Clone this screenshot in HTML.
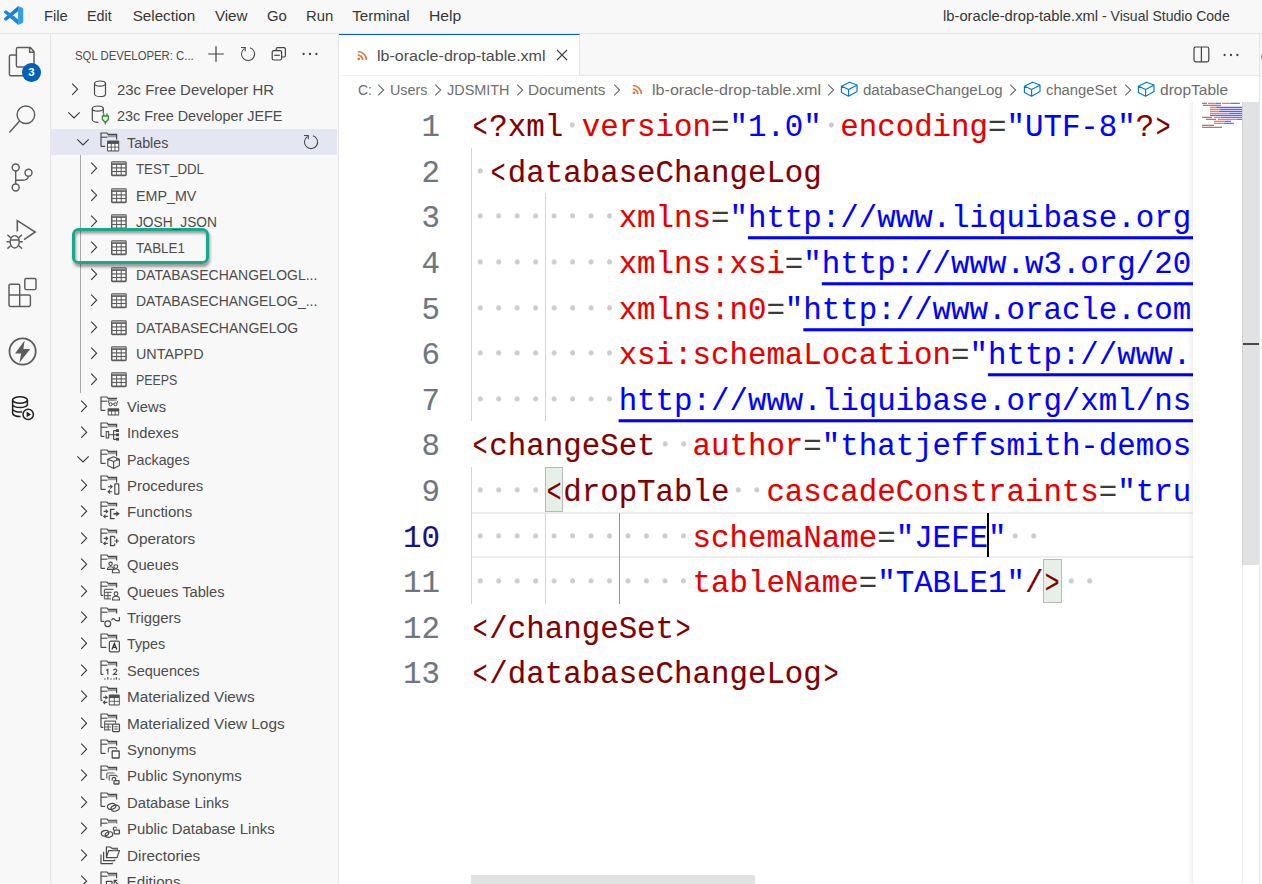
<!DOCTYPE html>
<html lang="en"><head><meta charset="utf-8"><title>lb-oracle-drop-table.xml - Visual Studio Code</title>
<style>
html,body{margin:0;padding:0}
body{width:1262px;height:884px;overflow:hidden;background:#f8f8f8;font-family:"Liberation Sans",sans-serif;position:relative;color:#3b3b3b;-webkit-font-smoothing:antialiased}
div,span,svg{box-sizing:border-box}
.a{position:absolute}
.t{position:absolute;white-space:pre;line-height:20px;height:20px;transform-origin:0 50%}
#titlebar{position:absolute;left:0;top:0;width:1262px;height:34px;background:#f8f8f8;border-bottom:1px solid #e5e5e5}
#activity{position:absolute;left:0;top:34px;width:51px;height:850px;background:#f8f8f8;border-right:1px solid #e5e5e5}
#sidebar{position:absolute;left:51px;top:34px;width:288px;height:850px;background:#f8f8f8;border-right:1px solid #e5e5e5}
#tabs{position:absolute;left:339px;top:34px;width:921px;height:42px;background:#f8f8f8;border-bottom:1px solid #e5e5e5}
#tab{position:absolute;left:0;top:0;width:241px;height:42px;background:#fff;border-top:1px solid #005fb8;border-right:1px solid #e5e5e5;border-bottom:1px solid #f3f3f3}
#crumbs{position:absolute;left:339px;top:76px;width:921px;height:26px;background:#fff}
#editor{position:absolute;left:339px;top:102px;width:921px;height:782px;background:#fff;overflow:hidden}
#right{position:absolute;left:1259px;top:34px;width:3px;height:850px;background:#fff;border-left:1px solid #e5e5e5;overflow:hidden}
#right i{position:absolute;left:0;top:0;width:2px;height:42px;background:#f8f8f8;border-bottom:1px solid #e5e5e5}
#right b{position:absolute;left:0.5px;top:17px;width:10px;height:10px;border:1.2px solid #8a8a8a;border-radius:50%}
#code{position:absolute;left:0;top:0;width:854px;height:782px;overflow:hidden}
.ln{position:absolute;left:0;width:102px;text-align:right;color:#6e7681;font-family:"Liberation Mono",monospace;white-space:pre}
.ln.cur{color:#171184}
.cl{position:absolute;white-space:pre;font-family:"Liberation Mono",monospace;color:#3b3b3b}
.tg{color:#800000}.br{display:inline-block;transform:scale(0.8,1.07) translateY(0.6px)}.at{color:#e50000}.st{color:#0000ff}.eq{color:#3b3b3b}
.u{text-decoration:underline;text-decoration-color:#0000ff}
.ws{background-repeat:repeat-x}
.g{position:absolute;width:1.2px;background:#d3d3d3}
.g.act{background:#939393}
.sel{position:absolute;background:#e4e6f1}
</style></head>
<body>
<div id="titlebar"><svg class="a" style="left:0.00px;top:0.00px" width="28" height="32" viewBox="0 0 28 32" ><path d="M18.3 6 L18.3 11 L6.6 20.5 Q5.7 21 4.9 20.3 L4.2 19.6 Q3.6 18.7 4.4 17.9 Z" fill="#1f7cc4"/><path d="M18.3 25 L18.3 19.6 L6.6 10.5 Q5.7 10 4.9 10.7 L4.2 11.4 Q3.6 12.3 4.4 13.1 Z" fill="#1b8ad8"/><path d="M18.1 6 L22.6 8.1 Q23.2 8.5 23.2 9.2 V21.8 Q23.2 22.5 22.6 22.9 L18.1 25 Z" fill="#2f9fee"/></svg></div>
<div id="activity"><svg class="a" style="left:6.00px;top:10.00px" width="32" height="36" viewBox="0 0 32 36" ><path d="M17.2 3.5 H24.4 L28 7.6 V21.4 a1.6 1.6 0 0 1 -1.6 1.6 H12 a1.6 1.6 0 0 1 -1.6 -1.6 V5.1 a1.6 1.6 0 0 1 1.6 -1.6 Z M23.6 3.8 V8.2 H27.8" fill="none" stroke="#5c5c5c" stroke-width="1.45" stroke-linejoin="round"/><path d="M10.4 11 H5 a1.6 1.6 0 0 0 -1.6 1.6 V30.2 a1.6 1.6 0 0 0 1.6 1.6 H17.6 a1.6 1.6 0 0 0 1.6 -1.6 V23" fill="none" stroke="#5c5c5c" stroke-width="1.45" /></svg><div class="a" style="left:22.1px;top:29.1px;width:18.8px;height:18.8px;border-radius:50%;background:#005fb8"></div><span class="a" style="left:22.1px;top:29.1px;width:18.8px;height:18.8px;line-height:19.2px;text-align:center;font-size:11.5px;font-weight:bold;color:#fff">3</span><svg class="a" style="left:6.00px;top:68.00px" width="34" height="34" viewBox="0 0 34 34" ><circle cx="19.9" cy="12.7" r="8.8" fill="none" stroke="#5c5c5c" stroke-width="1.45"/><path d="M13.6 19 L3.4 30.6" fill="none" stroke="#5c5c5c" stroke-width="1.45" /></svg><svg class="a" style="left:8.00px;top:126.00px" width="30" height="34" viewBox="0 0 30 34" ><circle cx="7.7" cy="7.4" r="3.5" fill="none" stroke="#5c5c5c" stroke-width="1.45"/><circle cx="20.5" cy="12.7" r="3.5" fill="none" stroke="#5c5c5c" stroke-width="1.45"/><circle cx="7.7" cy="27.4" r="3.5" fill="none" stroke="#5c5c5c" stroke-width="1.45"/><path d="M7.7 10.9 V23.9 M7.7 20.2 H14.6 q5.4 0 5.8 -4" fill="none" stroke="#5c5c5c" stroke-width="1.45" /></svg><svg class="a" style="left:4.00px;top:182.00px" width="36" height="40" viewBox="0 0 36 40" ><path d="M13.3 15.4 V4.6 L31.2 16 L20 23.6" fill="none" stroke="#5c5c5c" stroke-width="1.55" stroke-linejoin="miter"/><ellipse cx="10.7" cy="25.8" rx="4.6" ry="6.2" fill="none" stroke="#5c5c5c" stroke-width="1.45" /><path d="M6.2 24 H15.2 M3.4 18.8 L6.6 21.6 M18 18.8 L14.8 21.6 M2.6 25.8 H6 M15.4 25.8 H18.8 M3.4 32.6 L6.6 29.8 M18 32.6 L14.8 29.8" fill="none" stroke="#5c5c5c" stroke-width="1.45" /></svg><svg class="a" style="left:6.00px;top:242.00px" width="34" height="34" viewBox="0 0 34 34" ><path d="M3 9.6 a1.4 1.4 0 0 1 1.4 -1.4 H12.3 a1.4 1.4 0 0 1 1.4 1.4 V19 H23 a1.4 1.4 0 0 1 1.4 1.4 V29 a1.4 1.4 0 0 1 -1.4 1.4 H4.4 a1.4 1.4 0 0 1 -1.4 -1.4 Z M3 19 H13.7 V30.4" fill="none" stroke="#5c5c5c" stroke-width="1.45" /><rect x="18.8" y="2.4" width="11.2" height="11.2" rx="1.6" fill="none" stroke="#5c5c5c" stroke-width="1.45"/></svg><svg class="a" style="left:6.00px;top:301.00px" width="34" height="34" viewBox="0 0 34 34" ><circle cx="16.6" cy="16.5" r="13.1" fill="none" stroke="#5c5c5c" stroke-width="1.7999999999999998"/><path d="M18.6 5.4 L9 18.6 H15.2 L13.4 27.8 L24.2 14 H17.4 Z" fill="#5c5c5c"/></svg><svg class="a" style="left:10.00px;top:360.00px" width="28" height="28" viewBox="0 0 28 28" ><ellipse cx="10" cy="6" rx="7.4" ry="3.2" fill="none" stroke="#1f1f1f" stroke-width="1.5" /><path d="M2.6 6 V19.4 a7.4 3.2 0 0 0 8 3.1 M17.4 6 V11.4 M2.6 10.4 a7.4 3.2 0 0 0 14.8 0 M2.6 15 a7.4 3.2 0 0 0 9.6 2.9" fill="none" stroke="#1f1f1f" stroke-width="1.5" /><circle cx="18.2" cy="20.4" r="5.2" fill="#f8f8f8" stroke="#1f1f1f" stroke-width="1.5"/><path d="M16.6 17.6 L21 20.4 L16.6 23.2 Z" fill="#1f1f1f"/></svg></div>
<div id="sidebar"><div class="sel" style="left:0;top:95.0px;width:286px;height:26px"></div>
<div class="g" style="left:28.9px;width:1px;top:121.0px;height:238.0px;background:#a9a9a9"></div>
<svg class="a" style="left:155.74px;top:10.84px" width="18" height="18" viewBox="0 0 18 18" ><path d="M9 1.2 V16.8 M1.2 9 H16.8" fill="none" stroke="#424242" stroke-width="1.2" /></svg><svg class="a" style="left:187.50px;top:11.35px" width="18" height="18" viewBox="0 0 18 18" ><path d="M10.9 2.7 A6.6 6.6 0 1 1 5.6 3.4" fill="none" stroke="#4a4a4a" stroke-width="1.05" /><path d="M2 2.5 H6.3 V6.2" fill="none" stroke="#4a4a4a" stroke-width="1.05" /></svg><svg class="a" style="left:219.80px;top:12.10px" width="16" height="16" viewBox="0 0 16 16" ><rect x="1.2" y="4.6" width="9.4" height="9.4" rx="1.4" fill="none" stroke="#424242" stroke-width="1.2"/><path d="M3.2 9.3 H8.8" fill="none" stroke="#424242" stroke-width="1.2" /><path d="M5.2 4.4 V3 a1.4 1.4 0 0 1 1.4 -1.4 H13 a1.4 1.4 0 0 1 1.4 1.4 V9.6 a1.4 1.4 0 0 1 -1.4 1.4 H10.8" fill="none" stroke="#424242" stroke-width="1.2" /></svg><svg class="a" style="left:249.60px;top:17.10px" width="18" height="6" viewBox="0 0 18 6" ><circle cx="2.6" cy="3" r="1.15" fill="#424242"/><circle cx="9" cy="3" r="1.15" fill="#424242"/><circle cx="15.4" cy="3" r="1.15" fill="#424242"/></svg><svg class="a" style="left:251.30px;top:98.90px" width="18" height="18" viewBox="0 0 18 18" ><path d="M10.9 2.7 A6.6 6.6 0 1 1 5.6 3.4" fill="none" stroke="#4a4a4a" stroke-width="1.05" /><path d="M2 2.5 H6.3 V6.2" fill="none" stroke="#4a4a4a" stroke-width="1.05" /></svg>
<svg class="a" style="left:19.00px;top:46.20px" width="10" height="18" viewBox="0 0 10 18" ><path d="M2.2 3.6 L7.6 9.2 L2.2 14.8" fill="none" stroke="#3b3b3b" stroke-width="1.15" /></svg>
<svg class="a" style="left:42.40px;top:45.90px" width="14" height="19" viewBox="0 0 14 19" ><ellipse cx="7" cy="3.6" rx="5.5" ry="2.6" fill="none" stroke="#4a4a4a" stroke-width="1.2" /><path d="M1.5 3.6 V13.9 A5.5 2.6 0 0 0 12.5 13.9 V3.6" fill="none" stroke="#4a4a4a" stroke-width="1.2" /></svg>
<svg class="a" style="left:14.00px;top:76.20px" width="18" height="10" viewBox="0 0 18 10" ><path d="M3.3 2.3 L9 7.9 L14.7 2.3" fill="none" stroke="#3b3b3b" stroke-width="1.15" /></svg>
<svg class="a" style="left:39.70px;top:70.60px" width="20" height="21" viewBox="0 0 20 21" ><ellipse cx="6.8" cy="3.6" rx="5.5" ry="2.6" fill="none" stroke="#4a4a4a" stroke-width="1.2" /><path d="M1.3 3.6 V14.8 A5.5 2.6 0 0 0 7.4 17.3 M12.3 3.6 V8.4" fill="none" stroke="#4a4a4a" stroke-width="1.2" /><path d="M11.4 11 H17.4 V14.4 L14.4 17.6 L11.4 14.4 Z" fill="none" stroke="#388a34" stroke-width="1.4" stroke-linejoin="round"/><path d="M12.8 8.6 V11 M16 8.6 V11 M14.4 17.6 V19.4" fill="none" stroke="#388a34" stroke-width="1.4" /></svg>
<svg class="a" style="left:23.20px;top:103.20px" width="18" height="10" viewBox="0 0 18 10" ><path d="M3.3 2.3 L9 7.9 L14.7 2.3" fill="none" stroke="#3b3b3b" stroke-width="1.15" /></svg>
<svg class="a" style="left:48.90px;top:98.10px" width="22" height="22" viewBox="0 0 22 22" ><rect x="7.8" y="2.6" width="8.8" height="2.6" rx="0" fill="#9a9a9a"/><path d="M1 14.4 V1 H7.0 L8.2 2.4 H16.6 V7.6" fill="none" stroke="#4a4a4a" stroke-width="1.2" /><path d="M1 5.2 H7.4" fill="none" stroke="#4a4a4a" stroke-width="1.1" /><path d="M1 14.4 H5.2" fill="none" stroke="#4a4a4a" stroke-width="1.2" /><rect x="7.0" y="8.4" width="12.2" height="11" rx="1" fill="#505050"/><rect x="8.0" y="11.9" width="2.8" height="2.8" rx="0" fill="#fff"/><rect x="11.7" y="11.9" width="2.8" height="2.8" rx="0" fill="#fff"/><rect x="15.4" y="11.9" width="2.8" height="2.8" rx="0" fill="#fff"/><rect x="8.0" y="15.6" width="2.8" height="2.8" rx="0" fill="#fff"/><rect x="11.7" y="15.6" width="2.8" height="2.8" rx="0" fill="#fff"/><rect x="15.4" y="15.6" width="2.8" height="2.8" rx="0" fill="#fff"/></svg>
<svg class="a" style="left:38.20px;top:125.20px" width="10" height="18" viewBox="0 0 10 18" ><path d="M2.2 3.6 L7.6 9.2 L2.2 14.8" fill="none" stroke="#3b3b3b" stroke-width="1.15" /></svg>
<svg class="a" style="left:60.00px;top:127.00px" width="16" height="16" viewBox="0 0 16 16" ><rect x="0" y="0.3" width="15.8" height="14.9" rx="1.4" fill="#5c5c5c"/><rect x="1.0" y="1.1" width="13.8" height="1.3" rx="0.3" fill="#a4a4a4"/><rect x="1.5" y="3.9" width="3.6" height="2.4" rx="0" fill="#fdfdfd"/><rect x="6.1" y="3.9" width="3.6" height="2.4" rx="0" fill="#fdfdfd"/><rect x="10.7" y="3.9" width="3.6" height="2.4" rx="0" fill="#fdfdfd"/><rect x="1.5" y="7.5" width="3.6" height="2.4" rx="0" fill="#fdfdfd"/><rect x="6.1" y="7.5" width="3.6" height="2.4" rx="0" fill="#fdfdfd"/><rect x="10.7" y="7.5" width="3.6" height="2.4" rx="0" fill="#fdfdfd"/><rect x="1.5" y="11.1" width="3.6" height="2.4" rx="0" fill="#fdfdfd"/><rect x="6.1" y="11.1" width="3.6" height="2.4" rx="0" fill="#fdfdfd"/><rect x="10.7" y="11.1" width="3.6" height="2.4" rx="0" fill="#fdfdfd"/></svg>
<svg class="a" style="left:38.20px;top:152.20px" width="10" height="18" viewBox="0 0 10 18" ><path d="M2.2 3.6 L7.6 9.2 L2.2 14.8" fill="none" stroke="#3b3b3b" stroke-width="1.15" /></svg>
<svg class="a" style="left:60.00px;top:154.00px" width="16" height="16" viewBox="0 0 16 16" ><rect x="0" y="0.3" width="15.8" height="14.9" rx="1.4" fill="#5c5c5c"/><rect x="1.0" y="1.1" width="13.8" height="1.3" rx="0.3" fill="#a4a4a4"/><rect x="1.5" y="3.9" width="3.6" height="2.4" rx="0" fill="#fdfdfd"/><rect x="6.1" y="3.9" width="3.6" height="2.4" rx="0" fill="#fdfdfd"/><rect x="10.7" y="3.9" width="3.6" height="2.4" rx="0" fill="#fdfdfd"/><rect x="1.5" y="7.5" width="3.6" height="2.4" rx="0" fill="#fdfdfd"/><rect x="6.1" y="7.5" width="3.6" height="2.4" rx="0" fill="#fdfdfd"/><rect x="10.7" y="7.5" width="3.6" height="2.4" rx="0" fill="#fdfdfd"/><rect x="1.5" y="11.1" width="3.6" height="2.4" rx="0" fill="#fdfdfd"/><rect x="6.1" y="11.1" width="3.6" height="2.4" rx="0" fill="#fdfdfd"/><rect x="10.7" y="11.1" width="3.6" height="2.4" rx="0" fill="#fdfdfd"/></svg>
<svg class="a" style="left:38.20px;top:178.20px" width="10" height="18" viewBox="0 0 10 18" ><path d="M2.2 3.6 L7.6 9.2 L2.2 14.8" fill="none" stroke="#3b3b3b" stroke-width="1.15" /></svg>
<svg class="a" style="left:60.00px;top:180.00px" width="16" height="16" viewBox="0 0 16 16" ><rect x="0" y="0.3" width="15.8" height="14.9" rx="1.4" fill="#5c5c5c"/><rect x="1.0" y="1.1" width="13.8" height="1.3" rx="0.3" fill="#a4a4a4"/><rect x="1.5" y="3.9" width="3.6" height="2.4" rx="0" fill="#fdfdfd"/><rect x="6.1" y="3.9" width="3.6" height="2.4" rx="0" fill="#fdfdfd"/><rect x="10.7" y="3.9" width="3.6" height="2.4" rx="0" fill="#fdfdfd"/><rect x="1.5" y="7.5" width="3.6" height="2.4" rx="0" fill="#fdfdfd"/><rect x="6.1" y="7.5" width="3.6" height="2.4" rx="0" fill="#fdfdfd"/><rect x="10.7" y="7.5" width="3.6" height="2.4" rx="0" fill="#fdfdfd"/><rect x="1.5" y="11.1" width="3.6" height="2.4" rx="0" fill="#fdfdfd"/><rect x="6.1" y="11.1" width="3.6" height="2.4" rx="0" fill="#fdfdfd"/><rect x="10.7" y="11.1" width="3.6" height="2.4" rx="0" fill="#fdfdfd"/></svg>
<svg class="a" style="left:38.20px;top:204.20px" width="10" height="18" viewBox="0 0 10 18" ><path d="M2.2 3.6 L7.6 9.2 L2.2 14.8" fill="none" stroke="#3b3b3b" stroke-width="1.15" /></svg>
<svg class="a" style="left:60.00px;top:206.00px" width="16" height="16" viewBox="0 0 16 16" ><rect x="0" y="0.3" width="15.8" height="14.9" rx="1.4" fill="#5c5c5c"/><rect x="1.0" y="1.1" width="13.8" height="1.3" rx="0.3" fill="#a4a4a4"/><rect x="1.5" y="3.9" width="3.6" height="2.4" rx="0" fill="#fdfdfd"/><rect x="6.1" y="3.9" width="3.6" height="2.4" rx="0" fill="#fdfdfd"/><rect x="10.7" y="3.9" width="3.6" height="2.4" rx="0" fill="#fdfdfd"/><rect x="1.5" y="7.5" width="3.6" height="2.4" rx="0" fill="#fdfdfd"/><rect x="6.1" y="7.5" width="3.6" height="2.4" rx="0" fill="#fdfdfd"/><rect x="10.7" y="7.5" width="3.6" height="2.4" rx="0" fill="#fdfdfd"/><rect x="1.5" y="11.1" width="3.6" height="2.4" rx="0" fill="#fdfdfd"/><rect x="6.1" y="11.1" width="3.6" height="2.4" rx="0" fill="#fdfdfd"/><rect x="10.7" y="11.1" width="3.6" height="2.4" rx="0" fill="#fdfdfd"/></svg>
<svg class="a" style="left:38.20px;top:231.20px" width="10" height="18" viewBox="0 0 10 18" ><path d="M2.2 3.6 L7.6 9.2 L2.2 14.8" fill="none" stroke="#3b3b3b" stroke-width="1.15" /></svg>
<svg class="a" style="left:60.00px;top:233.00px" width="16" height="16" viewBox="0 0 16 16" ><rect x="0" y="0.3" width="15.8" height="14.9" rx="1.4" fill="#5c5c5c"/><rect x="1.0" y="1.1" width="13.8" height="1.3" rx="0.3" fill="#a4a4a4"/><rect x="1.5" y="3.9" width="3.6" height="2.4" rx="0" fill="#fdfdfd"/><rect x="6.1" y="3.9" width="3.6" height="2.4" rx="0" fill="#fdfdfd"/><rect x="10.7" y="3.9" width="3.6" height="2.4" rx="0" fill="#fdfdfd"/><rect x="1.5" y="7.5" width="3.6" height="2.4" rx="0" fill="#fdfdfd"/><rect x="6.1" y="7.5" width="3.6" height="2.4" rx="0" fill="#fdfdfd"/><rect x="10.7" y="7.5" width="3.6" height="2.4" rx="0" fill="#fdfdfd"/><rect x="1.5" y="11.1" width="3.6" height="2.4" rx="0" fill="#fdfdfd"/><rect x="6.1" y="11.1" width="3.6" height="2.4" rx="0" fill="#fdfdfd"/><rect x="10.7" y="11.1" width="3.6" height="2.4" rx="0" fill="#fdfdfd"/></svg>
<svg class="a" style="left:38.20px;top:257.20px" width="10" height="18" viewBox="0 0 10 18" ><path d="M2.2 3.6 L7.6 9.2 L2.2 14.8" fill="none" stroke="#3b3b3b" stroke-width="1.15" /></svg>
<svg class="a" style="left:60.00px;top:259.00px" width="16" height="16" viewBox="0 0 16 16" ><rect x="0" y="0.3" width="15.8" height="14.9" rx="1.4" fill="#5c5c5c"/><rect x="1.0" y="1.1" width="13.8" height="1.3" rx="0.3" fill="#a4a4a4"/><rect x="1.5" y="3.9" width="3.6" height="2.4" rx="0" fill="#fdfdfd"/><rect x="6.1" y="3.9" width="3.6" height="2.4" rx="0" fill="#fdfdfd"/><rect x="10.7" y="3.9" width="3.6" height="2.4" rx="0" fill="#fdfdfd"/><rect x="1.5" y="7.5" width="3.6" height="2.4" rx="0" fill="#fdfdfd"/><rect x="6.1" y="7.5" width="3.6" height="2.4" rx="0" fill="#fdfdfd"/><rect x="10.7" y="7.5" width="3.6" height="2.4" rx="0" fill="#fdfdfd"/><rect x="1.5" y="11.1" width="3.6" height="2.4" rx="0" fill="#fdfdfd"/><rect x="6.1" y="11.1" width="3.6" height="2.4" rx="0" fill="#fdfdfd"/><rect x="10.7" y="11.1" width="3.6" height="2.4" rx="0" fill="#fdfdfd"/></svg>
<svg class="a" style="left:38.20px;top:284.20px" width="10" height="18" viewBox="0 0 10 18" ><path d="M2.2 3.6 L7.6 9.2 L2.2 14.8" fill="none" stroke="#3b3b3b" stroke-width="1.15" /></svg>
<svg class="a" style="left:60.00px;top:286.00px" width="16" height="16" viewBox="0 0 16 16" ><rect x="0" y="0.3" width="15.8" height="14.9" rx="1.4" fill="#5c5c5c"/><rect x="1.0" y="1.1" width="13.8" height="1.3" rx="0.3" fill="#a4a4a4"/><rect x="1.5" y="3.9" width="3.6" height="2.4" rx="0" fill="#fdfdfd"/><rect x="6.1" y="3.9" width="3.6" height="2.4" rx="0" fill="#fdfdfd"/><rect x="10.7" y="3.9" width="3.6" height="2.4" rx="0" fill="#fdfdfd"/><rect x="1.5" y="7.5" width="3.6" height="2.4" rx="0" fill="#fdfdfd"/><rect x="6.1" y="7.5" width="3.6" height="2.4" rx="0" fill="#fdfdfd"/><rect x="10.7" y="7.5" width="3.6" height="2.4" rx="0" fill="#fdfdfd"/><rect x="1.5" y="11.1" width="3.6" height="2.4" rx="0" fill="#fdfdfd"/><rect x="6.1" y="11.1" width="3.6" height="2.4" rx="0" fill="#fdfdfd"/><rect x="10.7" y="11.1" width="3.6" height="2.4" rx="0" fill="#fdfdfd"/></svg>
<svg class="a" style="left:38.20px;top:310.20px" width="10" height="18" viewBox="0 0 10 18" ><path d="M2.2 3.6 L7.6 9.2 L2.2 14.8" fill="none" stroke="#3b3b3b" stroke-width="1.15" /></svg>
<svg class="a" style="left:60.00px;top:312.00px" width="16" height="16" viewBox="0 0 16 16" ><rect x="0" y="0.3" width="15.8" height="14.9" rx="1.4" fill="#5c5c5c"/><rect x="1.0" y="1.1" width="13.8" height="1.3" rx="0.3" fill="#a4a4a4"/><rect x="1.5" y="3.9" width="3.6" height="2.4" rx="0" fill="#fdfdfd"/><rect x="6.1" y="3.9" width="3.6" height="2.4" rx="0" fill="#fdfdfd"/><rect x="10.7" y="3.9" width="3.6" height="2.4" rx="0" fill="#fdfdfd"/><rect x="1.5" y="7.5" width="3.6" height="2.4" rx="0" fill="#fdfdfd"/><rect x="6.1" y="7.5" width="3.6" height="2.4" rx="0" fill="#fdfdfd"/><rect x="10.7" y="7.5" width="3.6" height="2.4" rx="0" fill="#fdfdfd"/><rect x="1.5" y="11.1" width="3.6" height="2.4" rx="0" fill="#fdfdfd"/><rect x="6.1" y="11.1" width="3.6" height="2.4" rx="0" fill="#fdfdfd"/><rect x="10.7" y="11.1" width="3.6" height="2.4" rx="0" fill="#fdfdfd"/></svg>
<svg class="a" style="left:38.20px;top:336.20px" width="10" height="18" viewBox="0 0 10 18" ><path d="M2.2 3.6 L7.6 9.2 L2.2 14.8" fill="none" stroke="#3b3b3b" stroke-width="1.15" /></svg>
<svg class="a" style="left:60.00px;top:338.00px" width="16" height="16" viewBox="0 0 16 16" ><rect x="0" y="0.3" width="15.8" height="14.9" rx="1.4" fill="#5c5c5c"/><rect x="1.0" y="1.1" width="13.8" height="1.3" rx="0.3" fill="#a4a4a4"/><rect x="1.5" y="3.9" width="3.6" height="2.4" rx="0" fill="#fdfdfd"/><rect x="6.1" y="3.9" width="3.6" height="2.4" rx="0" fill="#fdfdfd"/><rect x="10.7" y="3.9" width="3.6" height="2.4" rx="0" fill="#fdfdfd"/><rect x="1.5" y="7.5" width="3.6" height="2.4" rx="0" fill="#fdfdfd"/><rect x="6.1" y="7.5" width="3.6" height="2.4" rx="0" fill="#fdfdfd"/><rect x="10.7" y="7.5" width="3.6" height="2.4" rx="0" fill="#fdfdfd"/><rect x="1.5" y="11.1" width="3.6" height="2.4" rx="0" fill="#fdfdfd"/><rect x="6.1" y="11.1" width="3.6" height="2.4" rx="0" fill="#fdfdfd"/><rect x="10.7" y="11.1" width="3.6" height="2.4" rx="0" fill="#fdfdfd"/></svg>
<svg class="a" style="left:28.20px;top:363.20px" width="10" height="18" viewBox="0 0 10 18" ><path d="M2.2 3.6 L7.6 9.2 L2.2 14.8" fill="none" stroke="#3b3b3b" stroke-width="1.15" /></svg>
<svg class="a" style="left:48.90px;top:362.10px" width="22" height="22" viewBox="0 0 22 22" ><rect x="7.8" y="2.6" width="8.8" height="2.6" rx="0" fill="#9a9a9a"/><path d="M1 14.4 V1 H7.0 L8.2 2.4 H16.6 V3" fill="none" stroke="#4a4a4a" stroke-width="1.2" /><path d="M1 5.2 H7.4" fill="none" stroke="#4a4a4a" stroke-width="1.1" /><path d="M1 14.4 H5.2" fill="none" stroke="#4a4a4a" stroke-width="1.2" /><circle cx="10.6" cy="8.3" r="1.5" fill="none" stroke="#4a4a4a" stroke-width="1.0"/><circle cx="15.4" cy="8.3" r="1.5" fill="none" stroke="#4a4a4a" stroke-width="1.0"/><path d="M12.1 8 h1.8 M9.1 7.6 L8.4 5.2 M16.9 7.6 L17.7 5.2" fill="none" stroke="#4a4a4a" stroke-width="1.0" /><rect x="7.6" y="12.2" width="11.6" height="7.2" rx="1" fill="#505050"/><rect x="8.6" y="15.5" width="2.6" height="2.9" rx="0" fill="#fff"/><rect x="12.1" y="15.5" width="2.6" height="2.9" rx="0" fill="#fff"/><rect x="15.6" y="15.5" width="2.6" height="2.9" rx="0" fill="#fff"/></svg>
<svg class="a" style="left:28.20px;top:389.20px" width="10" height="18" viewBox="0 0 10 18" ><path d="M2.2 3.6 L7.6 9.2 L2.2 14.8" fill="none" stroke="#3b3b3b" stroke-width="1.15" /></svg>
<svg class="a" style="left:48.90px;top:388.10px" width="22" height="22" viewBox="0 0 22 22" ><rect x="7.8" y="2.6" width="8.8" height="2.6" rx="0" fill="#9a9a9a"/><path d="M1 14.4 V1 H7.0 L8.2 2.4 H16.6 V5.6" fill="none" stroke="#4a4a4a" stroke-width="1.2" /><path d="M1 5.2 H7.4" fill="none" stroke="#4a4a4a" stroke-width="1.1" /><path d="M1 14.4 H4.4" fill="none" stroke="#4a4a4a" stroke-width="1.2" /><rect x="6.2" y="9.6" width="2.4" height="6.4" rx="0" fill="none" stroke="#4a4a4a" stroke-width="1.1"/><path d="M8.6 12.8 H13.6 M13.6 8.6 V17.4 M13.6 8.6 H16 M13.6 17.4 H16 M13.6 12.8 H16" fill="none" stroke="#4a4a4a" stroke-width="1.1" /><rect x="16" y="7.2" width="3" height="2.8" rx="0" fill="#4a4a4a"/><rect x="16" y="11.4" width="3" height="2.8" rx="0" fill="#4a4a4a"/><rect x="16" y="15.8" width="3" height="2.8" rx="0" fill="#4a4a4a"/></svg>
<svg class="a" style="left:23.20px;top:420.20px" width="18" height="10" viewBox="0 0 18 10" ><path d="M3.3 2.3 L9 7.9 L14.7 2.3" fill="none" stroke="#3b3b3b" stroke-width="1.15" /></svg>
<svg class="a" style="left:48.90px;top:415.10px" width="22" height="22" viewBox="0 0 22 22" ><rect x="7.8" y="2.6" width="8.8" height="2.6" rx="0" fill="#9a9a9a"/><path d="M1 14.4 V1 H7.0 L8.2 2.4 H16.6 V7.2" fill="none" stroke="#4a4a4a" stroke-width="1.2" /><path d="M1 5.2 H7.4" fill="none" stroke="#4a4a4a" stroke-width="1.1" /><path d="M1 14.4 H5.6" fill="none" stroke="#4a4a4a" stroke-width="1.2" /><path d="M13.6 7.8 L19.4 10.2 V16.6 L13.6 19.6 L7.8 16.6 V10.2 Z M7.8 10.2 L13.6 12.6 L19.4 10.2 M13.6 12.6 V19.6 M16.6 9 V11.4" fill="none" stroke="#4a4a4a" stroke-width="1.1" stroke-linejoin="round"/></svg>
<svg class="a" style="left:28.20px;top:442.20px" width="10" height="18" viewBox="0 0 10 18" ><path d="M2.2 3.6 L7.6 9.2 L2.2 14.8" fill="none" stroke="#3b3b3b" stroke-width="1.15" /></svg>
<svg class="a" style="left:48.90px;top:441.10px" width="22" height="22" viewBox="0 0 22 22" ><rect x="7.8" y="2.6" width="8.8" height="2.6" rx="0" fill="#9a9a9a"/><path d="M1 14.4 V1 H7.0 L8.2 2.4 H16.6 V7.6" fill="none" stroke="#4a4a4a" stroke-width="1.2" /><path d="M1 5.2 H7.4" fill="none" stroke="#4a4a4a" stroke-width="1.1" /><path d="M1 14.4 H5.6" fill="none" stroke="#4a4a4a" stroke-width="1.2" /><path d="M8 11.8 h4 M10.2 10.0 l1.9 1.8 l-1.9 1.8" fill="none" stroke="#4a4a4a" stroke-width="1.1" /><path d="M12.2 16.8 h-4 M10 15.0 l-1.9 1.8 l1.9 1.8" fill="none" stroke="#4a4a4a" stroke-width="1.1" /><rect x="14.8" y="8.8" width="4" height="10.4" rx="0.6" fill="none" stroke="#4a4a4a" stroke-width="1.2"/></svg>
<svg class="a" style="left:28.20px;top:468.20px" width="10" height="18" viewBox="0 0 10 18" ><path d="M2.2 3.6 L7.6 9.2 L2.2 14.8" fill="none" stroke="#3b3b3b" stroke-width="1.15" /></svg>
<svg class="a" style="left:48.90px;top:467.10px" width="22" height="22" viewBox="0 0 22 22" ><rect x="7.8" y="2.6" width="8.8" height="2.6" rx="0" fill="#9a9a9a"/><path d="M1 14.4 V1 H7.0 L8.2 2.4 H16.6 V5.6" fill="none" stroke="#4a4a4a" stroke-width="1.2" /><path d="M1 5.2 H7.4" fill="none" stroke="#4a4a4a" stroke-width="1.1" /><path d="M1 14.4 H2.4" fill="none" stroke="#4a4a4a" stroke-width="1.2" /><path d="M3.6 10.4 h4 M5.800000000000001 8.6 l1.9 1.8 l-1.9 1.8" fill="none" stroke="#4a4a4a" stroke-width="1.1" /><path d="M7.800000000000001 15.4 h-4 M5.6 13.600000000000001 l-1.9 1.8 l1.9 1.8" fill="none" stroke="#4a4a4a" stroke-width="1.1" /><path d="M14.6 8.4 H10.6 V17.6 H14.6" fill="none" stroke="#4a4a4a" stroke-width="1.4" /><path d="M13.4 12.8 H17" fill="none" stroke="#4a4a4a" stroke-width="1.8" /><path d="M16.2 10 L19.8 12.8 L16.2 15.6 Z" fill="#4a4a4a"/></svg>
<svg class="a" style="left:28.20px;top:495.20px" width="10" height="18" viewBox="0 0 10 18" ><path d="M2.2 3.6 L7.6 9.2 L2.2 14.8" fill="none" stroke="#3b3b3b" stroke-width="1.15" /></svg>
<svg class="a" style="left:48.90px;top:494.10px" width="22" height="22" viewBox="0 0 22 22" ><rect x="7.8" y="2.6" width="8.8" height="2.6" rx="0" fill="#9a9a9a"/><path d="M1 14.4 V1 H7.0 L8.2 2.4 H16.6 V5.6" fill="none" stroke="#4a4a4a" stroke-width="1.2" /><path d="M1 5.2 H7.4" fill="none" stroke="#4a4a4a" stroke-width="1.1" /><path d="M1 14.4 H2.4" fill="none" stroke="#4a4a4a" stroke-width="1.2" /><path d="M3.6 10.4 h4 M5.800000000000001 8.6 l1.9 1.8 l-1.9 1.8" fill="none" stroke="#4a4a4a" stroke-width="1.1" /><path d="M7.800000000000001 15.4 h-4 M5.6 13.600000000000001 l-1.9 1.8 l1.9 1.8" fill="none" stroke="#4a4a4a" stroke-width="1.1" /><path d="M14.6 8.4 H10.6 V17.6 H14.6 M14.6 8.4 V10.4 M14.6 17.6 V15.6" fill="none" stroke="#4a4a4a" stroke-width="1.4" /><path d="M14.4 13 H19 M16.7 10.7 V15.3" fill="none" stroke="#4a4a4a" stroke-width="1.2" /></svg>
<svg class="a" style="left:28.20px;top:521.20px" width="10" height="18" viewBox="0 0 10 18" ><path d="M2.2 3.6 L7.6 9.2 L2.2 14.8" fill="none" stroke="#3b3b3b" stroke-width="1.15" /></svg>
<svg class="a" style="left:48.90px;top:520.10px" width="22" height="22" viewBox="0 0 22 22" ><rect x="7.8" y="2.6" width="8.8" height="2.6" rx="0" fill="#9a9a9a"/><path d="M1 14.4 V1 H7.0 L8.2 2.4 H16.6 V6.4" fill="none" stroke="#4a4a4a" stroke-width="1.2" /><path d="M1 5.2 H7.4" fill="none" stroke="#4a4a4a" stroke-width="1.1" /><path d="M1 14.4 H5.0" fill="none" stroke="#4a4a4a" stroke-width="1.2" /><circle cx="10.6" cy="9.8" r="1.71" fill="none" stroke="#4a4a4a" stroke-width="1.1"/><path d="M7.539999999999999 15.38 v-1.2 a3.4 2.6 0 0 1 6.12 0 v1.2 z" fill="none" stroke="#4a4a4a" stroke-width="1.1" /><circle cx="15.8" cy="12.6" r="1.9" fill="none" stroke="#4a4a4a" stroke-width="1.1"/><path d="M12.4 18.8 v-1.2 a3.4 2.6 0 0 1 6.8 0 v1.2 z" fill="none" stroke="#4a4a4a" stroke-width="1.1" /></svg>
<svg class="a" style="left:28.20px;top:548.20px" width="10" height="18" viewBox="0 0 10 18" ><path d="M2.2 3.6 L7.6 9.2 L2.2 14.8" fill="none" stroke="#3b3b3b" stroke-width="1.15" /></svg>
<svg class="a" style="left:48.90px;top:547.10px" width="22" height="22" viewBox="0 0 22 22" ><rect x="7.8" y="2.6" width="8.8" height="2.6" rx="0" fill="#9a9a9a"/><path d="M1 14.4 V1 H7.0 L8.2 2.4 H16.6 V6.4" fill="none" stroke="#4a4a4a" stroke-width="1.2" /><path d="M1 5.2 H7.4" fill="none" stroke="#4a4a4a" stroke-width="1.1" /><path d="M1 14.4 H3.2" fill="none" stroke="#4a4a4a" stroke-width="1.2" /><path d="M4.4 8.4 H13.4 M4.4 11.4 H11.6 M4.4 14.6 H11 M4.4 17.8 H11 M4.4 8.4 V17.8 M8 11.4 V17.8" fill="none" stroke="#666" stroke-width="1.2" /><circle cx="16" cy="12.8" r="1.9" fill="none" stroke="#4a4a4a" stroke-width="1.1"/><path d="M12.6 19.0 v-1.2 a3.4 2.6 0 0 1 6.8 0 v1.2 z" fill="none" stroke="#4a4a4a" stroke-width="1.1" /></svg>
<svg class="a" style="left:28.20px;top:574.20px" width="10" height="18" viewBox="0 0 10 18" ><path d="M2.2 3.6 L7.6 9.2 L2.2 14.8" fill="none" stroke="#3b3b3b" stroke-width="1.15" /></svg>
<svg class="a" style="left:48.90px;top:573.10px" width="22" height="22" viewBox="0 0 22 22" ><rect x="7.8" y="2.6" width="8.8" height="2.6" rx="0" fill="#9a9a9a"/><path d="M1 14.4 V1 H7.0 L8.2 2.4 H16.6 V6.4" fill="none" stroke="#4a4a4a" stroke-width="1.2" /><path d="M1 5.2 H7.4" fill="none" stroke="#4a4a4a" stroke-width="1.1" /><path d="M1 14.4 H4.4" fill="none" stroke="#4a4a4a" stroke-width="1.2" /><circle cx="7.8" cy="16.8" r="2.9" fill="none" stroke="#4a4a4a" stroke-width="1.2"/><path d="M11.4 13.4 q1.6 -3 3.2 -1 q1.8 2.4 4.2 1 M19.4 10 V13.6 H15.8" fill="none" stroke="#4a4a4a" stroke-width="1.2" /></svg>
<svg class="a" style="left:28.20px;top:600.20px" width="10" height="18" viewBox="0 0 10 18" ><path d="M2.2 3.6 L7.6 9.2 L2.2 14.8" fill="none" stroke="#3b3b3b" stroke-width="1.15" /></svg>
<svg class="a" style="left:48.90px;top:599.10px" width="22" height="22" viewBox="0 0 22 22" ><rect x="7.8" y="2.6" width="8.8" height="2.6" rx="0" fill="#9a9a9a"/><path d="M1 14.4 V1 H7.0 L8.2 2.4 H16.6 V6.4" fill="none" stroke="#4a4a4a" stroke-width="1.2" /><path d="M1 5.2 H7.4" fill="none" stroke="#4a4a4a" stroke-width="1.1" /><path d="M1 14.4 H6.4" fill="none" stroke="#4a4a4a" stroke-width="1.2" /><rect x="9.4" y="8.2" width="10" height="10.6" rx="1.4" fill="none" stroke="#4a4a4a" stroke-width="1.2"/><path d="M12 16.4 L14.4 10.4 L16.8 16.4 M12.9 14.4 H15.9" fill="none" stroke="#333" stroke-width="1.3" /></svg>
<svg class="a" style="left:28.20px;top:627.20px" width="10" height="18" viewBox="0 0 10 18" ><path d="M2.2 3.6 L7.6 9.2 L2.2 14.8" fill="none" stroke="#3b3b3b" stroke-width="1.15" /></svg>
<svg class="a" style="left:48.90px;top:626.10px" width="22" height="22" viewBox="0 0 22 22" ><rect x="7.8" y="2.6" width="8.8" height="2.6" rx="0" fill="#9a9a9a"/><path d="M1 14.4 V1 H7.0 L8.2 2.4 H16.6 V6.4" fill="none" stroke="#4a4a4a" stroke-width="1.2" /><path d="M1 5.2 H7.4" fill="none" stroke="#4a4a4a" stroke-width="1.1" /><path d="M1 14.4 H3.4" fill="none" stroke="#4a4a4a" stroke-width="1.2" /><path d="M6.2 10.6 L7.8 9.4 V14.6" fill="none" stroke="#4a4a4a" stroke-width="1.2" /><path d="M13.6 10.4 q0.2 -1.2 1.6 -1.2 q1.6 0 1.6 1.4 q0 1 -3.2 3.8 H17.2" fill="none" stroke="#4a4a4a" stroke-width="1.2" /><rect x="4.2" y="18.4" width="1.2" height="1.2" rx="0" fill="#4a4a4a"/><rect x="7.2" y="17.2" width="1.2" height="2.4" rx="0" fill="#4a4a4a"/><rect x="10.4" y="18.4" width="1.2" height="1.2" rx="0" fill="#4a4a4a"/><rect x="13.4" y="18.4" width="1.2" height="1.2" rx="0" fill="#4a4a4a"/><rect x="15.8" y="17.2" width="1.2" height="2.4" rx="0" fill="#4a4a4a"/><rect x="18.6" y="18.4" width="1.2" height="1.2" rx="0" fill="#4a4a4a"/></svg>
<svg class="a" style="left:28.20px;top:653.20px" width="10" height="18" viewBox="0 0 10 18" ><path d="M2.2 3.6 L7.6 9.2 L2.2 14.8" fill="none" stroke="#3b3b3b" stroke-width="1.15" /></svg>
<svg class="a" style="left:48.90px;top:652.10px" width="22" height="22" viewBox="0 0 22 22" ><rect x="7.8" y="2.6" width="8.8" height="2.6" rx="0" fill="#9a9a9a"/><path d="M1 14.4 V1 H7.0 L8.2 2.4 H16.6 V7.2" fill="none" stroke="#4a4a4a" stroke-width="1.2" /><path d="M1 5.2 H7.4" fill="none" stroke="#4a4a4a" stroke-width="1.1" /><path d="M1 14.4 H2.4" fill="none" stroke="#4a4a4a" stroke-width="1.2" /><path d="M3.2 11.4 h4 M5.4 9.6 l1.9 1.8 l-1.9 1.8" fill="none" stroke="#4a4a4a" stroke-width="1.1" /><path d="M7.4 16.4 h-4 M5.2 14.600000000000001 l-1.9 1.8 l1.9 1.8" fill="none" stroke="#4a4a4a" stroke-width="1.1" /><rect x="8.8" y="8.6" width="11" height="10.8" rx="1" fill="#505050"/><rect x="9.8" y="12.1" width="4.05" height="2.7" rx="0" fill="#fff"/><rect x="14.75" y="12.1" width="4.05" height="2.7" rx="0" fill="#fff"/><rect x="9.8" y="15.7" width="4.05" height="2.7" rx="0" fill="#fff"/><rect x="14.75" y="15.7" width="4.05" height="2.7" rx="0" fill="#fff"/></svg>
<svg class="a" style="left:28.20px;top:680.20px" width="10" height="18" viewBox="0 0 10 18" ><path d="M2.2 3.6 L7.6 9.2 L2.2 14.8" fill="none" stroke="#3b3b3b" stroke-width="1.15" /></svg>
<svg class="a" style="left:48.90px;top:679.10px" width="22" height="22" viewBox="0 0 22 22" ><rect x="7.8" y="2.6" width="8.8" height="2.6" rx="0" fill="#9a9a9a"/><path d="M1 14.4 V1 H7.0 L8.2 2.4 H16.6 V6.4" fill="none" stroke="#4a4a4a" stroke-width="1.2" /><path d="M1 5.2 H7.4" fill="none" stroke="#4a4a4a" stroke-width="1.1" /><path d="M1 14.4 H3.4" fill="none" stroke="#4a4a4a" stroke-width="1.2" /><path d="M4.6 8.2 H15.6 V10.4 M4.6 8.2 V16.8 H10.6 M4.6 11.2 H12 M4.6 14 H11 M8.2 11.2 V16.8" fill="none" stroke="#666" stroke-width="1.2" /><rect x="12.6" y="11.2" width="6.8" height="7.4" rx="0.8" fill="none" stroke="#4a4a4a" stroke-width="1.3"/><path d="M14.4 13.8 H17.6 M14.4 16 H17.6" fill="none" stroke="#4a4a4a" stroke-width="1.1" /></svg>
<svg class="a" style="left:28.20px;top:706.20px" width="10" height="18" viewBox="0 0 10 18" ><path d="M2.2 3.6 L7.6 9.2 L2.2 14.8" fill="none" stroke="#3b3b3b" stroke-width="1.15" /></svg>
<svg class="a" style="left:48.90px;top:705.10px" width="22" height="22" viewBox="0 0 22 22" ><rect x="7.8" y="2.6" width="8.8" height="2.6" rx="0" fill="#9a9a9a"/><path d="M1 14.4 V1 H7.0 L8.2 2.4 H16.6 V6.4" fill="none" stroke="#4a4a4a" stroke-width="1.2" /><path d="M1 5.2 H7.4" fill="none" stroke="#4a4a4a" stroke-width="1.1" /><path d="M1 14.4 H5.6" fill="none" stroke="#4a4a4a" stroke-width="1.2" /><path d="M8.4 13.6 V9.8 q0 -1.2 1.2 -1.2 H15.4 q1.2 0 1.2 1.2 V10.4" fill="none" stroke="#666" stroke-width="1.2" /><rect x="12.2" y="12" width="7" height="7" rx="0.6" fill="none" stroke="#4a4a4a" stroke-width="1.3"/></svg>
<svg class="a" style="left:28.20px;top:732.20px" width="10" height="18" viewBox="0 0 10 18" ><path d="M2.2 3.6 L7.6 9.2 L2.2 14.8" fill="none" stroke="#3b3b3b" stroke-width="1.15" /></svg>
<svg class="a" style="left:48.90px;top:731.10px" width="22" height="22" viewBox="0 0 22 22" ><rect x="7.8" y="2.6" width="8.8" height="2.6" rx="0" fill="#9a9a9a"/><path d="M1 14.4 V1 H7.0 L8.2 2.4 H16.6 V5.6" fill="none" stroke="#4a4a4a" stroke-width="1.2" /><path d="M1 5.2 H7.4" fill="none" stroke="#4a4a4a" stroke-width="1.1" /><path d="M1 14.4 H4.6" fill="none" stroke="#4a4a4a" stroke-width="1.2" /><path d="M6.8 13.4 V9 q0 -1 1 -1 H14.6 M9.2 15.4 V11.4 q0 -1 1 -1 H16 q1 0 1 1 V12" fill="none" stroke="#666" stroke-width="1.2" /><path d="M12.2 15.6 V14 a1.7 1.7 0 0 1 3.4 0 V15.2" fill="none" stroke="#4a4a4a" stroke-width="1.2" /><rect x="14" y="15.6" width="5" height="3.4" rx="0.4" fill="none" stroke="#4a4a4a" stroke-width="1.3"/></svg>
<svg class="a" style="left:28.20px;top:759.20px" width="10" height="18" viewBox="0 0 10 18" ><path d="M2.2 3.6 L7.6 9.2 L2.2 14.8" fill="none" stroke="#3b3b3b" stroke-width="1.15" /></svg>
<svg class="a" style="left:48.90px;top:758.10px" width="22" height="22" viewBox="0 0 22 22" ><rect x="7.8" y="2.6" width="8.8" height="2.6" rx="0" fill="#9a9a9a"/><path d="M1 14.4 V1 H7.0 L8.2 2.4 H16.6 V7.4" fill="none" stroke="#4a4a4a" stroke-width="1.2" /><path d="M1 5.2 H7.4" fill="none" stroke="#4a4a4a" stroke-width="1.1" /><path d="M1 14.4 H5.2" fill="none" stroke="#4a4a4a" stroke-width="1.2" /><ellipse cx="11.6" cy="14.4" rx="4.2" ry="2.9" fill="none" stroke="#4a4a4a" stroke-width="1.2" transform="rotate(-14 11.6 14.4)"/><ellipse cx="15.2" cy="16.2" rx="4.2" ry="2.9" fill="none" stroke="#4a4a4a" stroke-width="1.2" transform="rotate(-14 15.2 16.2)"/></svg>
<svg class="a" style="left:28.20px;top:785.20px" width="10" height="18" viewBox="0 0 10 18" ><path d="M2.2 3.6 L7.6 9.2 L2.2 14.8" fill="none" stroke="#3b3b3b" stroke-width="1.15" /></svg>
<svg class="a" style="left:48.90px;top:784.10px" width="22" height="22" viewBox="0 0 22 22" ><path d="M1 8.4 V1 H7.0 L8.2 2.4 H16.6 V5.6" fill="none" stroke="#4a4a4a" stroke-width="1.2" /><rect x="7.8" y="2.6" width="8.8" height="2.6" rx="0" fill="#9a9a9a"/><path d="M1 5.2 H7.4" fill="none" stroke="#4a4a4a" stroke-width="1.1" /><ellipse cx="5" cy="15.2" rx="3.8" ry="2.7" fill="none" stroke="#4a4a4a" stroke-width="1.2" transform="rotate(-14 5 15.2)"/><ellipse cx="9" cy="16.6" rx="3.8" ry="2.7" fill="none" stroke="#4a4a4a" stroke-width="1.2" transform="rotate(-14 9 16.6)"/><path d="M13.4 12 V10.6 a1.6 1.6 0 0 1 3.2 0" fill="none" stroke="#4a4a4a" stroke-width="1.2" /><rect x="14.2" y="12.2" width="5.2" height="3.6" rx="0.4" fill="none" stroke="#4a4a4a" stroke-width="1.3"/></svg>
<svg class="a" style="left:28.20px;top:812.20px" width="10" height="18" viewBox="0 0 10 18" ><path d="M2.2 3.6 L7.6 9.2 L2.2 14.8" fill="none" stroke="#3b3b3b" stroke-width="1.15" /></svg>
<svg class="a" style="left:48.90px;top:811.10px" width="22" height="22" viewBox="0 0 22 22" ><path d="M1 9.4 V18.6 H12.2 V17.4 M3.6 6.8 V15.6 H14.6 V14.6" fill="none" stroke="#4a4a4a" stroke-width="1.2" /><path d="M6.4 12.6 V2 H10.6 L12 3.4 H17.4 V5.6" fill="none" stroke="#4a4a4a" stroke-width="1.2" /><path d="M6.4 12.6 L8.6 5.6 H19.4 L17 12.6 Z" fill="none" stroke="#4a4a4a" stroke-width="1.2" stroke-linejoin="round"/><rect x="12.4" y="3.6" width="5" height="2" rx="0" fill="#9a9a9a"/></svg>
<svg class="a" style="left:28.20px;top:838.20px" width="10" height="18" viewBox="0 0 10 18" ><path d="M2.2 3.6 L7.6 9.2 L2.2 14.8" fill="none" stroke="#3b3b3b" stroke-width="1.15" /></svg>
<svg class="a" style="left:48.90px;top:837.10px" width="22" height="22" viewBox="0 0 22 22" ><rect x="7.8" y="2.6" width="8.8" height="2.6" rx="0" fill="#9a9a9a"/><path d="M1 14.4 V1 H7.0 L8.2 2.4 H16.6 V7.2" fill="none" stroke="#4a4a4a" stroke-width="1.2" /><path d="M1 5.2 H7.4" fill="none" stroke="#4a4a4a" stroke-width="1.1" /><path d="M1 14.4 H3.4" fill="none" stroke="#4a4a4a" stroke-width="1.2" /><rect x="6.4" y="10.4" width="5.6" height="8" rx="0.4" fill="none" stroke="#4a4a4a" stroke-width="1.2"/><rect x="8.2" y="13" width="2" height="1.2" rx="0" fill="#4a4a4a"/><path d="M19.2 14.6 L14.4 9.6 M14.2 12.6 V9.4 H17.4" fill="none" stroke="#4a4a4a" stroke-width="1.3" /></svg>
<div class="a" style="left:21.2px;top:194px;width:137.3px;height:36px;border:3.4px solid #16aa8b;border-radius:6.5px;box-shadow:1px 2.5px 3px rgba(0,0,0,0.38),inset 1px 2.5px 3px rgba(0,0,0,0.38)"></div></div>
<div id="tabs"><div id="tab"></div><svg class="a" style="left:17.70px;top:15.60px" width="11" height="11" viewBox="0 0 11 11" ><circle cx="1.9" cy="8.9" r="1.35" fill="#e37933" stroke="#e37933" stroke-width="0"/><path d="M0.8 5.1 a5 5 0 0 1 5 5 M0.8 1.5 a8.6 8.6 0 0 1 8.6 8.6" fill="none" stroke="#e37933" stroke-width="1.7" /></svg><svg class="a" style="left:217.30px;top:15.00px" width="12" height="12" viewBox="0 0 12 12" ><path d="M1 1 L11 11 M11 1 L1 11" fill="none" stroke="#424242" stroke-width="1.2" /></svg><svg class="a" style="left:853.90px;top:11.60px" width="17" height="17" viewBox="0 0 17 17" ><rect x="1" y="1" width="14.8" height="14.8" rx="1.8" fill="none" stroke="#424242" stroke-width="1.2"/><path d="M8.4 1 V15.8" fill="none" stroke="#424242" stroke-width="1.2" /></svg><svg class="a" style="left:882.90px;top:17.60px" width="18" height="6" viewBox="0 0 18 6" ><circle cx="2.6" cy="3" r="1.15" fill="#424242"/><circle cx="9" cy="3" r="1.15" fill="#424242"/><circle cx="15.4" cy="3" r="1.15" fill="#424242"/></svg></div>
<div id="crumbs"><svg class="a" style="left:38.05px;top:6.50px" width="9" height="14" viewBox="0 0 9 14" ><path d="M1.2 1.7 L6.7 7 L1.2 12.3" fill="none" stroke="#6b6b6b" stroke-width="1.1" /></svg><svg class="a" style="left:94.55px;top:6.50px" width="9" height="14" viewBox="0 0 9 14" ><path d="M1.2 1.7 L6.7 7 L1.2 12.3" fill="none" stroke="#6b6b6b" stroke-width="1.1" /></svg><svg class="a" style="left:176.95px;top:6.50px" width="9" height="14" viewBox="0 0 9 14" ><path d="M1.2 1.7 L6.7 7 L1.2 12.3" fill="none" stroke="#6b6b6b" stroke-width="1.1" /></svg><svg class="a" style="left:274.25px;top:6.50px" width="9" height="14" viewBox="0 0 9 14" ><path d="M1.2 1.7 L6.7 7 L1.2 12.3" fill="none" stroke="#6b6b6b" stroke-width="1.1" /></svg><svg class="a" style="left:487.85px;top:6.50px" width="9" height="14" viewBox="0 0 9 14" ><path d="M1.2 1.7 L6.7 7 L1.2 12.3" fill="none" stroke="#6b6b6b" stroke-width="1.1" /></svg><svg class="a" style="left:670.35px;top:6.50px" width="9" height="14" viewBox="0 0 9 14" ><path d="M1.2 1.7 L6.7 7 L1.2 12.3" fill="none" stroke="#6b6b6b" stroke-width="1.1" /></svg><svg class="a" style="left:784.55px;top:6.50px" width="9" height="14" viewBox="0 0 9 14" ><path d="M1.2 1.7 L6.7 7 L1.2 12.3" fill="none" stroke="#6b6b6b" stroke-width="1.1" /></svg><svg class="a" style="left:293.20px;top:8.20px" width="11" height="11" viewBox="0 0 11 11" ><circle cx="1.9" cy="8.9" r="1.35" fill="#e37933" stroke="#e37933" stroke-width="0"/><path d="M0.8 5.1 a5 5 0 0 1 5 5 M0.8 1.5 a8.6 8.6 0 0 1 8.6 8.6" fill="none" stroke="#e37933" stroke-width="1.7" /></svg><svg class="a" style="left:501.30px;top:4.60px" width="19" height="18" viewBox="0 0 19 18" ><path d="M9.6 1.2 L17 4 V10.6 L8.6 15.2 L1.4 11.6 V5.2 Z M1.6 5.2 L8.6 8.6 L16.8 4.2 M8.6 8.6 V15" fill="none" stroke="#007acc" stroke-width="1.15" stroke-linejoin="round"/></svg><svg class="a" style="left:683.70px;top:4.60px" width="19" height="18" viewBox="0 0 19 18" ><path d="M9.6 1.2 L17 4 V10.6 L8.6 15.2 L1.4 11.6 V5.2 Z M1.6 5.2 L8.6 8.6 L16.8 4.2 M8.6 8.6 V15" fill="none" stroke="#007acc" stroke-width="1.15" stroke-linejoin="round"/></svg><svg class="a" style="left:798.00px;top:4.60px" width="19" height="18" viewBox="0 0 19 18" ><path d="M9.6 1.2 L17 4 V10.6 L8.6 15.2 L1.4 11.6 V5.2 Z M1.6 5.2 L8.6 8.6 L16.8 4.2 M8.6 8.6 V15" fill="none" stroke="#007acc" stroke-width="1.15" stroke-linejoin="round"/></svg></div>
<div id="editor"><div id="code"><style>.cl,.ln{font-size:30.79px;letter-spacing:-0.004px;line-height:45.6px;height:45.6px;-webkit-text-stroke:0.12px;transform:scaleY(1.025);transform-origin:0 31.01px}.ws{background-image:radial-gradient(circle at 9.24px 15.2px,#cccccc 2.1px,rgba(204,204,204,0) 2.9px);background-size:18.473px 100%}.u{text-decoration-thickness:2.5px;text-underline-offset:8.8px}</style>
<div class="a" style="left:131.9px;top:410.0px;width:722.1px;height:45.8px;border-top:2px solid #eeeeee;border-bottom:2px solid #eeeeee"></div>
<div class="a" style="left:205.5px;top:365.3px;width:18.5px;height:44.4px;background:#e6f0e6;border:1px solid #b9b9b9"></div>
<div class="a" style="left:704.3px;top:456.5px;width:18.5px;height:44.4px;background:#e6f0e6;border:1px solid #b9b9b9"></div>
<div class="g" style="left:131.9px;top:45.8px;height:273.6px"></div>
<div class="g" style="left:205.8px;top:91.4px;height:228.0px"></div>
<div class="g" style="left:131.9px;top:365.0px;height:136.8px"></div>
<div class="g" style="left:205.8px;top:410.6px;height:91.2px"></div>
<div class="g act" style="left:279.7px;top:410.6px;height:91.2px"></div>
<div class="ln" style="top:3.1px;left:-1px">1</div>
<div class="cl" style="left:131.9px;top:3.1px"><span class="tg"><span class="br">&lt;</span>?xml</span><span class="ws"> </span><span class="at">version</span><span class="eq">=</span><span class="st">&quot;1.0&quot;</span><span class="ws"> </span><span class="at">encoding</span><span class="eq">=</span><span class="st">&quot;UTF-8&quot;</span><span class="tg">?<span class="br">&gt;</span></span></div>
<div class="ln" style="top:48.7px;left:-1px">2</div>
<div class="cl" style="left:131.9px;top:48.7px"><span class="ws"> </span><span class="tg"><span class="br">&lt;</span>databaseChangeLog</span></div>
<div class="ln" style="top:94.3px;left:-1px">3</div>
<div class="cl" style="left:131.9px;top:94.3px"><span class="ws">        </span><span class="at">xmlns</span><span class="eq">=</span><span class="st">&quot;</span><span class="st u">http://www.liquibase.org/xml/ns/dbchangelog</span><span class="st">&quot;</span></div>
<div class="ln" style="top:139.9px;left:-1px">4</div>
<div class="cl" style="left:131.9px;top:139.9px"><span class="ws">        </span><span class="at">xmlns:xsi</span><span class="eq">=</span><span class="st">&quot;</span><span class="st u">http://www.w3.org/2001/XMLSchema-instance</span><span class="st">&quot;</span></div>
<div class="ln" style="top:185.5px;left:-1px">5</div>
<div class="cl" style="left:131.9px;top:185.5px"><span class="ws">        </span><span class="at">xmlns:n0</span><span class="eq">=</span><span class="st">&quot;</span><span class="st u">http://www.oracle.com/xml/ns/dbchangelog-ext</span><span class="st">&quot;</span></div>
<div class="ln" style="top:231.1px;left:-1px">6</div>
<div class="cl" style="left:131.9px;top:231.1px"><span class="ws">        </span><span class="at">xsi:schemaLocation</span><span class="eq">=</span><span class="st">&quot;</span><span class="st u">http://www.liquibase.org/xml/ns/dbchangelog</span></div>
<div class="ln" style="top:276.7px;left:-1px">7</div>
<div class="cl" style="left:131.9px;top:276.7px"><span class="ws">        </span><span class="st u">http://www.liquibase.org/xml/ns/dbchangelog/dbchangelog-latest.xsd</span><span class="st">&quot;</span><span class="tg"><span class="br">&gt;</span></span></div>
<div class="ln" style="top:322.3px;left:-1px">8</div>
<div class="cl" style="left:131.9px;top:322.3px"><span class="tg"><span class="br">&lt;</span>changeSet</span><span class="ws">  </span><span class="at">author</span><span class="eq">=</span><span class="st">&quot;thatjeffsmith-demos&quot;</span><span class="ws"> </span><span class="at">id</span><span class="eq">=</span><span class="st">&quot;drop-table1&quot;</span><span class="tg"><span class="br">&gt;</span></span></div>
<div class="ln" style="top:367.9px;left:-1px">9</div>
<div class="cl" style="left:131.9px;top:367.9px"><span class="ws">    </span><span class="tg"><span class="br">&lt;</span>dropTable</span><span class="ws">  </span><span class="at">cascadeConstraints</span><span class="eq">=</span><span class="st">&quot;true&quot;</span></div>
<div class="ln cur" style="top:413.5px;left:-1px">10</div>
<div class="cl" style="left:131.9px;top:413.5px"><span class="ws">            </span><span class="at">schemaName</span><span class="eq">=</span><span class="st">&quot;JEFE&quot;</span><span class="ws">  </span></div>
<div class="ln" style="top:459.1px;left:-1px">11</div>
<div class="cl" style="left:131.9px;top:459.1px"><span class="ws">            </span><span class="at">tableName</span><span class="eq">=</span><span class="st">&quot;TABLE1&quot;</span><span class="tg">/<span class="br">&gt;</span></span><span class="ws">  </span></div>
<div class="ln" style="top:504.7px;left:-1px">12</div>
<div class="cl" style="left:131.9px;top:504.7px"><span class="tg"><span class="br">&lt;</span>/changeSet<span class="br">&gt;</span></span></div>
<div class="ln" style="top:550.3px;left:-1px">13</div>
<div class="cl" style="left:131.9px;top:550.3px"><span class="tg"><span class="br">&lt;</span>/databaseChangeLog<span class="br">&gt;</span></span></div>
<div class="a" style="left:648.1px;top:411.1px;width:2.4px;height:44.1px;background:#000"></div></div><div class="a" style="left:848px;top:0;width:6px;height:782px;background:linear-gradient(to right,rgba(0,0,0,0),rgba(0,0,0,0.06))"></div>
<div class="a" style="left:863px;top:1px;width:5px;height:1px;background:#b87474"></div><div class="a" style="left:863px;top:0px;width:5px;height:1px;background:#b87474;opacity:0.28"></div><div class="a" style="left:869px;top:1px;width:7px;height:1px;background:#f27878"></div><div class="a" style="left:869px;top:0px;width:7px;height:1px;background:#f27878;opacity:0.28"></div><div class="a" style="left:876px;top:1px;width:1px;height:1px;background:#aaaaaa"></div><div class="a" style="left:876px;top:0px;width:1px;height:1px;background:#aaaaaa;opacity:0.28"></div><div class="a" style="left:877px;top:1px;width:5px;height:1px;background:#6c6cff"></div><div class="a" style="left:877px;top:0px;width:5px;height:1px;background:#6c6cff;opacity:0.28"></div><div class="a" style="left:883px;top:1px;width:8px;height:1px;background:#f27878"></div><div class="a" style="left:883px;top:0px;width:8px;height:1px;background:#f27878;opacity:0.28"></div><div class="a" style="left:891px;top:1px;width:1px;height:1px;background:#aaaaaa"></div><div class="a" style="left:891px;top:0px;width:1px;height:1px;background:#aaaaaa;opacity:0.28"></div><div class="a" style="left:892px;top:1px;width:7px;height:1px;background:#6c6cff"></div><div class="a" style="left:892px;top:0px;width:7px;height:1px;background:#6c6cff;opacity:0.28"></div><div class="a" style="left:899px;top:1px;width:2px;height:1px;background:#b87474"></div><div class="a" style="left:899px;top:0px;width:2px;height:1px;background:#b87474;opacity:0.28"></div><div class="a" style="left:864px;top:3px;width:18px;height:1px;background:#b87474"></div><div class="a" style="left:864px;top:2px;width:18px;height:1px;background:#b87474;opacity:0.28"></div><div class="a" style="left:871px;top:5px;width:5px;height:1px;background:#f27878"></div><div class="a" style="left:871px;top:4px;width:5px;height:1px;background:#f27878;opacity:0.28"></div><div class="a" style="left:876px;top:5px;width:1px;height:1px;background:#aaaaaa"></div><div class="a" style="left:876px;top:4px;width:1px;height:1px;background:#aaaaaa;opacity:0.28"></div><div class="a" style="left:877px;top:5px;width:1px;height:1px;background:#6c6cff"></div><div class="a" style="left:877px;top:4px;width:1px;height:1px;background:#6c6cff;opacity:0.28"></div><div class="a" style="left:878px;top:5px;width:25px;height:1px;background:#5c5cff"></div><div class="a" style="left:878px;top:4px;width:25px;height:1px;background:#5c5cff;opacity:0.28"></div><div class="a" style="left:871px;top:7px;width:9px;height:1px;background:#f27878"></div><div class="a" style="left:871px;top:6px;width:9px;height:1px;background:#f27878;opacity:0.28"></div><div class="a" style="left:880px;top:7px;width:1px;height:1px;background:#aaaaaa"></div><div class="a" style="left:880px;top:6px;width:1px;height:1px;background:#aaaaaa;opacity:0.28"></div><div class="a" style="left:881px;top:7px;width:1px;height:1px;background:#6c6cff"></div><div class="a" style="left:881px;top:6px;width:1px;height:1px;background:#6c6cff;opacity:0.28"></div><div class="a" style="left:882px;top:7px;width:21px;height:1px;background:#5c5cff"></div><div class="a" style="left:882px;top:6px;width:21px;height:1px;background:#5c5cff;opacity:0.28"></div><div class="a" style="left:871px;top:9px;width:8px;height:1px;background:#f27878"></div><div class="a" style="left:871px;top:8px;width:8px;height:1px;background:#f27878;opacity:0.28"></div><div class="a" style="left:879px;top:9px;width:1px;height:1px;background:#aaaaaa"></div><div class="a" style="left:879px;top:8px;width:1px;height:1px;background:#aaaaaa;opacity:0.28"></div><div class="a" style="left:880px;top:9px;width:1px;height:1px;background:#6c6cff"></div><div class="a" style="left:880px;top:8px;width:1px;height:1px;background:#6c6cff;opacity:0.28"></div><div class="a" style="left:881px;top:9px;width:22px;height:1px;background:#5c5cff"></div><div class="a" style="left:881px;top:8px;width:22px;height:1px;background:#5c5cff;opacity:0.28"></div><div class="a" style="left:871px;top:11px;width:18px;height:1px;background:#f27878"></div><div class="a" style="left:871px;top:10px;width:18px;height:1px;background:#f27878;opacity:0.28"></div><div class="a" style="left:889px;top:11px;width:1px;height:1px;background:#aaaaaa"></div><div class="a" style="left:889px;top:10px;width:1px;height:1px;background:#aaaaaa;opacity:0.28"></div><div class="a" style="left:890px;top:11px;width:1px;height:1px;background:#6c6cff"></div><div class="a" style="left:890px;top:10px;width:1px;height:1px;background:#6c6cff;opacity:0.28"></div><div class="a" style="left:891px;top:11px;width:12px;height:1px;background:#5c5cff"></div><div class="a" style="left:891px;top:10px;width:12px;height:1px;background:#5c5cff;opacity:0.28"></div><div class="a" style="left:871px;top:13px;width:32px;height:1px;background:#5c5cff"></div><div class="a" style="left:871px;top:12px;width:32px;height:1px;background:#5c5cff;opacity:0.28"></div><div class="a" style="left:863px;top:15px;width:10px;height:1px;background:#b87474"></div><div class="a" style="left:863px;top:14px;width:10px;height:1px;background:#b87474;opacity:0.28"></div><div class="a" style="left:875px;top:15px;width:6px;height:1px;background:#f27878"></div><div class="a" style="left:875px;top:14px;width:6px;height:1px;background:#f27878;opacity:0.28"></div><div class="a" style="left:881px;top:15px;width:1px;height:1px;background:#aaaaaa"></div><div class="a" style="left:881px;top:14px;width:1px;height:1px;background:#aaaaaa;opacity:0.28"></div><div class="a" style="left:882px;top:15px;width:21px;height:1px;background:#6c6cff"></div><div class="a" style="left:882px;top:14px;width:21px;height:1px;background:#6c6cff;opacity:0.28"></div><div class="a" style="left:867px;top:17px;width:10px;height:1px;background:#b87474"></div><div class="a" style="left:867px;top:16px;width:10px;height:1px;background:#b87474;opacity:0.28"></div><div class="a" style="left:879px;top:17px;width:18px;height:1px;background:#f27878"></div><div class="a" style="left:879px;top:16px;width:18px;height:1px;background:#f27878;opacity:0.28"></div><div class="a" style="left:897px;top:17px;width:1px;height:1px;background:#aaaaaa"></div><div class="a" style="left:897px;top:16px;width:1px;height:1px;background:#aaaaaa;opacity:0.28"></div><div class="a" style="left:898px;top:17px;width:5px;height:1px;background:#6c6cff"></div><div class="a" style="left:898px;top:16px;width:5px;height:1px;background:#6c6cff;opacity:0.28"></div><div class="a" style="left:875px;top:19px;width:10px;height:1px;background:#f27878"></div><div class="a" style="left:875px;top:18px;width:10px;height:1px;background:#f27878;opacity:0.28"></div><div class="a" style="left:885px;top:19px;width:1px;height:1px;background:#aaaaaa"></div><div class="a" style="left:885px;top:18px;width:1px;height:1px;background:#aaaaaa;opacity:0.28"></div><div class="a" style="left:886px;top:19px;width:6px;height:1px;background:#6c6cff"></div><div class="a" style="left:886px;top:18px;width:6px;height:1px;background:#6c6cff;opacity:0.28"></div><div class="a" style="left:875px;top:21px;width:9px;height:1px;background:#f27878"></div><div class="a" style="left:875px;top:20px;width:9px;height:1px;background:#f27878;opacity:0.28"></div><div class="a" style="left:884px;top:21px;width:1px;height:1px;background:#aaaaaa"></div><div class="a" style="left:884px;top:20px;width:1px;height:1px;background:#aaaaaa;opacity:0.28"></div><div class="a" style="left:885px;top:21px;width:8px;height:1px;background:#6c6cff"></div><div class="a" style="left:885px;top:20px;width:8px;height:1px;background:#6c6cff;opacity:0.28"></div><div class="a" style="left:893px;top:21px;width:2px;height:1px;background:#b87474"></div><div class="a" style="left:893px;top:20px;width:2px;height:1px;background:#b87474;opacity:0.28"></div><div class="a" style="left:863px;top:23px;width:12px;height:1px;background:#b87474"></div><div class="a" style="left:863px;top:22px;width:12px;height:1px;background:#b87474;opacity:0.28"></div><div class="a" style="left:863px;top:25px;width:20px;height:1px;background:#b87474"></div><div class="a" style="left:863px;top:24px;width:20px;height:1px;background:#b87474;opacity:0.28"></div>
<div class="a" style="left:903px;top:0;width:17px;height:782px;border-left:1px solid #ececec"></div>
<div class="a" style="left:903px;top:0;width:17px;height:463px;background:#e1e2e4;border-left:1px solid #d2d2d4"></div>
<div class="a" style="left:904px;top:241px;width:16px;height:2px;background:#4a4a4a"></div>
<div class="a" style="left:132px;top:773px;width:284px;height:9px;background:#e1e2e4"></div></div>
<div id="right"><i></i><b></b></div>
<div id="labels"><span class="t menu" style="left:44.43px;top:5.73px;font-size:15.2px;transform:scaleX(0.9728);color:#363636">File</span>
<span class="t menu" style="left:87.46px;top:5.73px;font-size:15.2px;transform:scaleX(0.9402);color:#363636">Edit</span>
<span class="t menu" style="left:132.70px;top:5.73px;font-size:15.2px;color:#363636">Selection</span>
<span class="t menu" style="left:214.90px;top:5.73px;font-size:15.2px;color:#363636">View</span>
<span class="t menu" style="left:267.00px;top:5.73px;font-size:15.2px;transform:scaleX(0.9791);color:#363636">Go</span>
<span class="t menu" style="left:305.62px;top:5.73px;font-size:15.2px;transform:scaleX(0.9767);color:#363636">Run</span>
<span class="t menu" style="left:352.20px;top:5.73px;font-size:15.2px;color:#363636">Terminal</span>
<span class="t menu" style="left:428.77px;top:5.73px;font-size:15.2px;transform:scaleX(1.0340);color:#363636">Help</span>
<span class="t title" style="left:942.50px;top:6.31px;font-size:14.4px;transform:scaleX(1.0261);color:#363636">lb-oracle-drop-table.xml</span>
<span class="t title" style="left:1102.20px;top:6.31px;font-size:14.4px;transform:scaleX(0.9754);color:#363636">- Visual Studio Code</span>
<span class="t sbtitle" style="left:74.50px;top:45.63px;font-size:13.2px;transform:scaleX(0.8604);color:#4c4c4c">SQL DEVELOPER: C...</span>
<span class="t row" style="left:117.00px;top:80.03px;font-size:15.2px;transform:scaleX(0.9839);color:#4c4c4c">23c Free Developer HR</span>
<span class="t row" style="left:117.00px;top:106.03px;font-size:15.2px;transform:scaleX(0.9467);color:#4c4c4c">23c Free Developer JEFE</span>
<span class="t row" style="left:126.60px;top:133.03px;font-size:15.2px;transform:scaleX(0.9434);color:#4c4c4c">Tables</span>
<span class="t row" style="left:136.40px;top:159.03px;font-size:15.2px;transform:scaleX(0.8757);color:#4c4c4c">TEST_DDL</span>
<span class="t row" style="left:136.40px;top:186.03px;font-size:15.2px;transform:scaleX(0.9414);color:#4c4c4c">EMP_MV</span>
<span class="t row" style="left:136.40px;top:212.03px;font-size:15.2px;transform:scaleX(0.9052);color:#4c4c4c">JOSH_JSON</span>
<span class="t row" style="left:136.40px;top:238.03px;font-size:15.2px;transform:scaleX(0.8839);color:#4c4c4c">TABLE1</span>
<span class="t row" style="left:136.40px;top:265.03px;font-size:15.2px;transform:scaleX(0.9208);color:#4c4c4c">DATABASECHANGELOGL...</span>
<span class="t row" style="left:136.40px;top:291.03px;font-size:15.2px;transform:scaleX(0.9208);color:#4c4c4c">DATABASECHANGELOG_...</span>
<span class="t row" style="left:136.40px;top:318.03px;font-size:15.2px;transform:scaleX(0.9228);color:#4c4c4c">DATABASECHANGELOG</span>
<span class="t row" style="left:136.40px;top:344.03px;font-size:15.2px;transform:scaleX(0.9458);color:#4c4c4c">UNTAPPD</span>
<span class="t row" style="left:136.40px;top:370.03px;font-size:15.2px;transform:scaleX(0.8175);color:#4c4c4c">PEEPS</span>
<span class="t row" style="left:126.60px;top:397.03px;font-size:15.2px;transform:scaleX(0.9694);color:#4c4c4c">Views</span>
<span class="t row" style="left:126.60px;top:423.03px;font-size:15.2px;transform:scaleX(0.9683);color:#4c4c4c">Indexes</span>
<span class="t row" style="left:126.60px;top:450.03px;font-size:15.2px;transform:scaleX(0.9374);color:#4c4c4c">Packages</span>
<span class="t row" style="left:126.60px;top:476.03px;font-size:15.2px;transform:scaleX(0.9812);color:#4c4c4c">Procedures</span>
<span class="t row" style="left:126.60px;top:502.03px;font-size:15.2px;transform:scaleX(0.9902);color:#4c4c4c">Functions</span>
<span class="t row" style="left:126.60px;top:529.03px;font-size:15.2px;transform:scaleX(1.0098);color:#4c4c4c">Operators</span>
<span class="t row" style="left:126.60px;top:555.03px;font-size:15.2px;transform:scaleX(0.9683);color:#4c4c4c">Queues</span>
<span class="t row" style="left:126.60px;top:582.03px;font-size:15.2px;transform:scaleX(0.9654);color:#4c4c4c">Queues Tables</span>
<span class="t row" style="left:126.60px;top:608.03px;font-size:15.2px;transform:scaleX(0.9794);color:#4c4c4c">Triggers</span>
<span class="t row" style="left:126.60px;top:634.03px;font-size:15.2px;transform:scaleX(0.9432);color:#4c4c4c">Types</span>
<span class="t row" style="left:126.60px;top:661.03px;font-size:15.2px;transform:scaleX(0.9542);color:#4c4c4c">Sequences</span>
<span class="t row" style="left:126.60px;top:687.03px;font-size:15.2px;transform:scaleX(1.0099);color:#4c4c4c">Materialized Views</span>
<span class="t row" style="left:126.60px;top:714.03px;font-size:15.2px;transform:scaleX(1.0109);color:#4c4c4c">Materialized View Logs</span>
<span class="t row" style="left:126.60px;top:740.03px;font-size:15.2px;transform:scaleX(0.9760);color:#4c4c4c">Synonyms</span>
<span class="t row" style="left:126.60px;top:766.03px;font-size:15.2px;transform:scaleX(0.9855);color:#4c4c4c">Public Synonyms</span>
<span class="t row" style="left:126.60px;top:793.03px;font-size:15.2px;transform:scaleX(0.9744);color:#4c4c4c">Database Links</span>
<span class="t row" style="left:126.60px;top:819.03px;font-size:15.2px;transform:scaleX(0.9822);color:#4c4c4c">Public Database Links</span>
<span class="t row" style="left:126.60px;top:846.03px;font-size:15.2px;transform:scaleX(1.0084);color:#4c4c4c">Directories</span>
<span class="t row" style="left:126.60px;top:872.03px;font-size:15.2px;color:#4c4c4c">Editions</span>
<span class="t tab" style="left:376.84px;top:45.93px;font-size:15.2px;transform:scaleX(1.0566);color:#4c4c4c">lb-oracle-drop-table.xml</span>
<span class="t bc" style="left:358.00px;top:79.73px;font-size:15.2px;transform:scaleX(0.9164);color:#6e6e6e">C:</span>
<span class="t bc" style="left:389.56px;top:79.73px;font-size:15.2px;transform:scaleX(0.9446);color:#6e6e6e">Users</span>
<span class="t bc" style="left:447.00px;top:79.73px;font-size:15.2px;transform:scaleX(0.9500);color:#6e6e6e">JDSMITH</span>
<span class="t bc" style="left:528.39px;top:79.73px;font-size:15.2px;transform:scaleX(1.0089);color:#6e6e6e">Documents</span>
<span class="t bc" style="left:651.94px;top:79.73px;font-size:15.2px;transform:scaleX(1.0591);color:#6e6e6e">lb-oracle-drop-table.xml</span>
<span class="t bc" style="left:863.10px;top:79.73px;font-size:15.2px;transform:scaleX(0.9908);color:#6e6e6e">databaseChangeLog</span>
<span class="t bc" style="left:1045.60px;top:79.73px;font-size:15.2px;transform:scaleX(0.9741);color:#6e6e6e">changeSet</span>
<span class="t bc" style="left:1159.80px;top:79.73px;font-size:15.2px;transform:scaleX(1.0218);color:#6e6e6e">dropTable</span></div>
</body></html>
